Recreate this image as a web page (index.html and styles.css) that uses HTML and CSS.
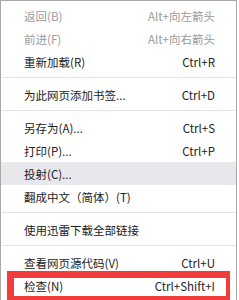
FILE: index.html
```html
<!DOCTYPE html>
<html lang="zh-CN">
<head>
    <meta charset="UTF-8">
    <meta name="viewport" content="width=device-width, initial-scale=1.0">
    <title>右键菜单</title>
    <link rel="stylesheet" href="styles.css">
</head>
<body>
    <div class="menu">
        <div class="item disabled"><span>返回(B)</span><span class="key">Alt+向左箭头</span></div>
        <div class="item disabled"><span>前进(F)</span><span class="key">Alt+向右箭头</span></div>
        <div class="item"><span>重新加载(R)</span><span class="key">Ctrl+R</span></div>
        <div class="sep"></div>
        <div class="item"><span>为此网页添加书签...</span><span class="key">Ctrl+D</span></div>
        <div class="sep"></div>
        <div class="item"><span>另存为(A)...</span><span class="key">Ctrl+S</span></div>
        <div class="item"><span>打印(P)...</span><span class="key">Ctrl+P</span></div>
        <div class="item hover"><span>投射(C)...</span></div>
        <div class="item"><span>翻成中文（简体）(T)</span></div>
        <div class="sep"></div>
        <div class="item"><span>使用迅雷下载全部链接</span></div>
        <div class="sep"></div>
        <div class="item"><span>查看网页源代码(V)</span><span class="key">Ctrl+U</span></div>
        <div class="item"><span>检查(N)</span><span class="key">Ctrl+Shift+I</span></div>

        <!-- 红框标注 -->
        <div class="mark"></div>
    </div>
</body>
</html>
```

FILE: styles.css
```css
body {
    margin: 0;
    background-color: #ffffff;
    font-family: 'Noto Sans CJK SC', 'Liberation Sans', sans-serif;
    font-size: 11.5px;
    overflow: hidden;
}
.menu {
    position: relative;
    width: 237px;
    height: 300px;
    border: 1px solid #a9a9a9;
    border-bottom: none;
    padding-top: 3px;
    box-sizing: border-box;
    overflow: hidden;
}
.item {
    display: flex;
    justify-content: space-between;
    align-items: center;
    height: 23px;
    padding: 0 21px 0 23px;
    color: #222222;
}
.item.disabled {
    color: #9a9a9a;
}
.item.hover {
    background-color: #e8e8ec;
}
.sep {
    height: 1px;
    background-color: #e3e3e3;
    margin: 4px 0 5px 1px;
}
.mark {
    position: absolute;
    left: 6px;
    top: 270px;
    width: 223px;
    height: 31px;
    border: 7px solid #f23c3c;
    border-right-width: 4px;
    border-bottom-width: 6px;
    box-sizing: border-box;
}
```
